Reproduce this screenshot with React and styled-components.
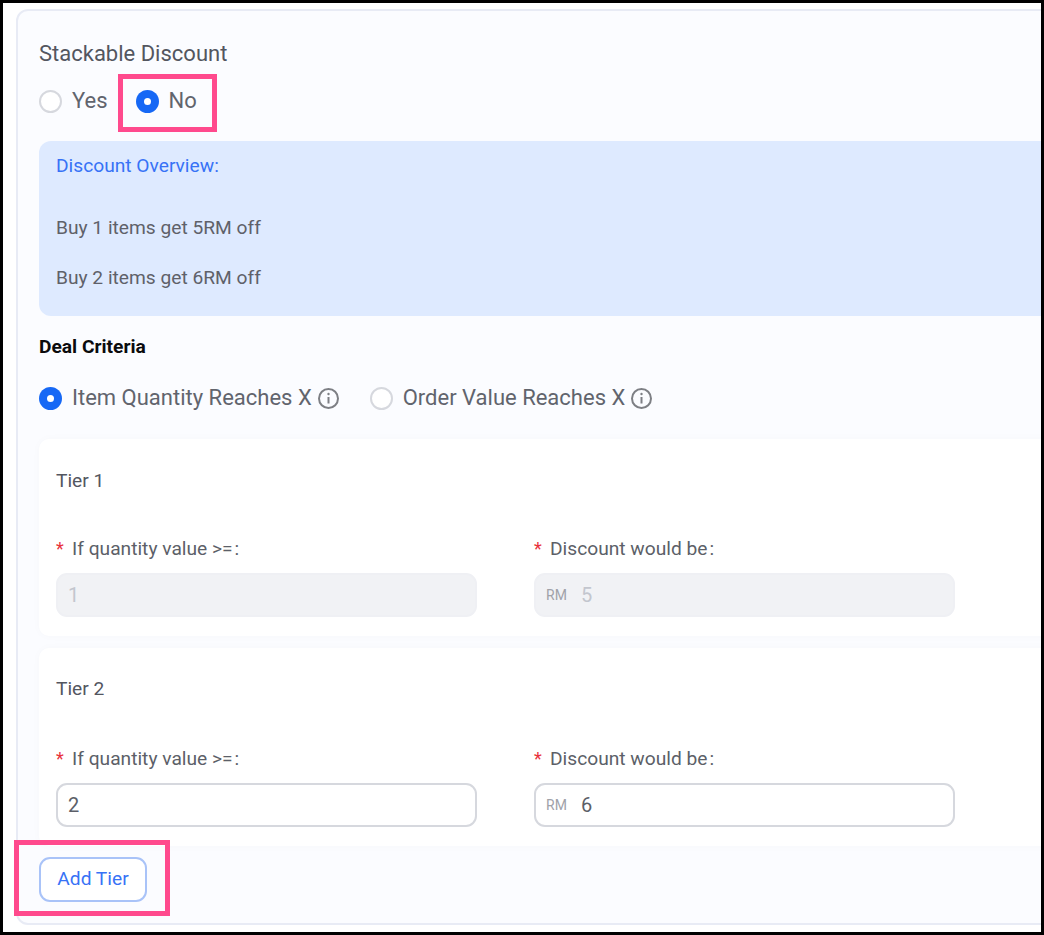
import React from "react";
import styled, { createGlobalStyle } from "styled-components";

const Global = createGlobalStyle`
  html, body { margin: 0; padding: 0; background: #fff; }
  body { font-family: Roboto, "Liberation Sans", sans-serif; }
  * { box-sizing: border-box; }
`;

const Frame = styled.div`
  position: relative;
  width: 1044px;
  height: 935px;
  border: 3px solid #000;
  background: #fff;
  overflow: hidden;
  padding: 6px 0 0 13px;
`;

const Card = styled.section`
  width: 1100px;
  height: 916px;
  border: 2px solid #e8ebf5;
  border-radius: 12px;
  background: #fbfcff;
  padding: 28px 21px 0;
`;

const FieldTitle = styled.div`
  font-size: 22px;
  line-height: 30px;
  color: #53565f;
`;

const RadioRow = styled.div`
  display: flex;
  align-items: center;
  height: 30px;
  margin-top: ${(p) => p.$top}px;
`;

const RadioItem = styled.label`
  display: flex;
  align-items: center;
  font-size: 22px;
  line-height: 30px;
  color: #61646d;
  margin-right: ${(p) => p.$gap}px;
`;

const RadioDot = styled.span`
  width: 23px;
  height: 23px;
  border-radius: 50%;
  margin-right: 10px;
  flex: none;
  display: flex;
  align-items: center;
  justify-content: center;
  border: ${(p) => (p.$on ? "none" : "2px solid #d6d8de")};
  background: ${(p) => (p.$on ? "#1668f5" : "#fff")};
  &::after {
    content: "";
    display: ${(p) => (p.$on ? "block" : "none")};
    width: 7px;
    height: 7px;
    border-radius: 50%;
    background: #fff;
  }
`;

const InfoIcon = styled.svg`
  width: 23px;
  height: 23px;
  margin-left: 5px;
  color: #7d7f84;
  flex: none;
`;

const Overview = styled.div`
  margin-top: 25px;
  height: 175px;
  border-radius: 12px;
  background: #deeaff;
  padding: 13px 17px 0;
  font-size: 19.2px;
  color: #5f6169;
`;

const OverviewTitle = styled.div`
  line-height: 24px;
  color: #3772f6;
`;

const OverviewLine = styled.div`
  line-height: 24px;
  margin-top: ${(p) => p.$top}px;
`;

const SectionTitle = styled.div`
  margin-top: 19px;
  font-size: 19.2px;
  line-height: 24px;
  font-weight: 700;
  color: #0b0b0d;
`;

const TierCard = styled.div`
  margin-top: ${(p) => p.$top}px;
  border-radius: 10px;
  background: #fff;
  box-shadow: 0 0 10px rgba(40, 50, 90, 0.025);
  padding: ${(p) => p.$pad}px 17px 19px;
`;

const TierTitle = styled.div`
  font-size: 19.2px;
  line-height: 24px;
  color: #53565f;
`;

const TierFields = styled.div`
  display: flex;
  gap: 57px;
  margin-top: ${(p) => p.$top}px;
`;

const Field = styled.div`
  width: 421px;
`;

const FieldLabel = styled.div`
  font-size: 19.2px;
  line-height: 24px;
  color: #5c5f68;
  display: flex;
  align-items: center;
`;

const Star = styled.span`
  color: #e8323c;
  font-size: 18px;
  width: 16px;
  flex: none;
`;

const Colon = styled.span`
  margin-left: 2px;
`;

const InputBox = styled.div`
  margin-top: 12px;
  height: 44px;
  border-radius: 11px;
  display: flex;
  align-items: center;
  padding: 0 10px;
  font-size: 20px;
  border: 2px solid ${(p) => (p.$disabled ? "#eff0f4" : "#d6d8de")};
  background: ${(p) => (p.$disabled ? "#f1f2f5" : "#fff")};
  color: ${(p) => (p.$disabled ? "#c3c6ce" : "#5c5f68")};
`;

const Prefix = styled.span`
  font-size: 14px;
  color: #a0a2a9;
  width: 35px;
  flex: none;
`;

const AddButton = styled.button`
  display: block;
  margin-top: 11px;
  width: 108px;
  height: 45px;
  border: 2px solid #a9c3f8;
  border-radius: 11px;
  background: #fff;
  color: #3772f6;
  font: 400 19.2px Roboto, sans-serif;
  padding: 0 0 2px;
`;

const Highlight = styled.div`
  position: absolute;
  left: ${(p) => p.$x}px;
  top: ${(p) => p.$y}px;
  width: ${(p) => p.$w}px;
  height: ${(p) => p.$h}px;
  border: 5px solid #ff4a8d;
`;

const Info = () => (
  <InfoIcon viewBox="0 0 23 23" fill="none" stroke="currentColor">
    <circle cx="11.5" cy="11.5" r="9.5" strokeWidth="2" />
    <path d="M11.5 10v6.5" strokeWidth="2" />
    <circle cx="11.5" cy="7" r="1.2" fill="currentColor" stroke="none" />
  </InfoIcon>
);

const Tier = ({ title, top, pad, firstValue, secondValue, disabled, fieldTop }) => (
  <TierCard $top={top} $pad={pad}>
    <TierTitle>{title}</TierTitle>
    <TierFields $top={fieldTop}>
      <Field>
        <FieldLabel>
          <Star>*</Star>If quantity value &gt;=<Colon>:</Colon>
        </FieldLabel>
        <InputBox $disabled={disabled}>{firstValue}</InputBox>
      </Field>
      <Field>
        <FieldLabel>
          <Star>*</Star>Discount would be<Colon>:</Colon>
        </FieldLabel>
        <InputBox $disabled={disabled}>
          <Prefix>RM</Prefix>
          {secondValue}
        </InputBox>
      </Field>
    </TierFields>
  </TierCard>
);

export default function App() {
  return (
    <>
      <Global />
      <Frame>
        <Card>
          <FieldTitle>Stackable Discount</FieldTitle>
          <RadioRow $top={17}>
            <RadioItem $gap={28}>
              <RadioDot />
              Yes
            </RadioItem>
            <RadioItem $gap={0}>
              <RadioDot $on />
              No
            </RadioItem>
          </RadioRow>
          <Overview>
            <OverviewTitle>Discount Overview:</OverviewTitle>
            <OverviewLine $top={38}>Buy 1 items get 5RM off</OverviewLine>
            <OverviewLine $top={26}>Buy 2 items get 6RM off</OverviewLine>
          </Overview>
          <SectionTitle>Deal Criteria</SectionTitle>
          <RadioRow $top={24}>
            <RadioItem $gap={30}>
              <RadioDot $on />
              Item Quantity Reaches X
              <Info />
            </RadioItem>
            <RadioItem $gap={0}>
              <RadioDot />
              Order Value Reaches X
              <Info />
            </RadioItem>
          </RadioRow>
          <Tier title="Tier 1" top={26} pad={30} firstValue="1" secondValue="5" disabled fieldTop={44} />
          <Tier title="Tier 2" top={12} pad={29} firstValue="2" secondValue="6" fieldTop={46} />
          <AddButton>Add Tier</AddButton>
        </Card>
        <Highlight $x={115} $y={71} $w={99} $h={58} />
        <Highlight $x={11} $y={837} $w={156} $h={76} />
      </Frame>
    </>
  );
}
